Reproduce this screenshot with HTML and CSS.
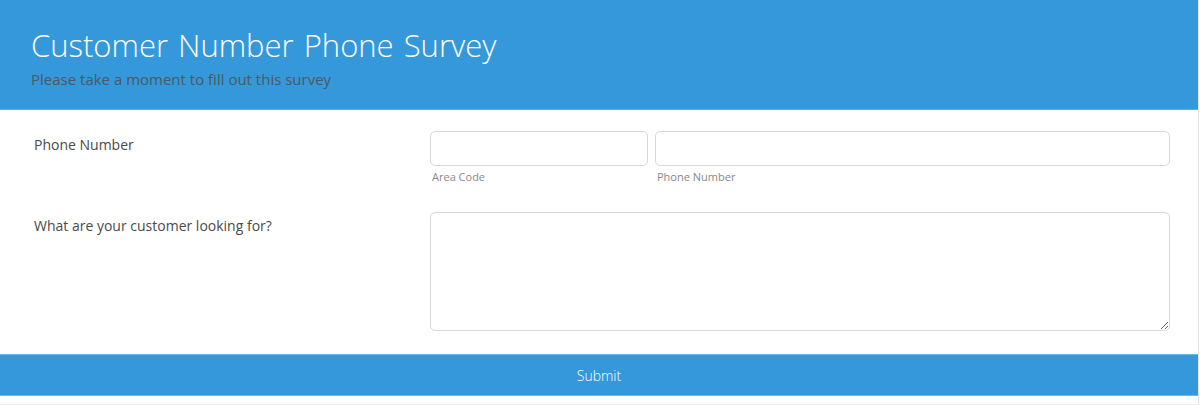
FILE: index.html
```html
<!DOCTYPE html>
<html lang="en">
<head>
<meta charset="UTF-8" />
<title>Customer Number Phone Survey</title>
<link rel="stylesheet" href="styles.css">
</head>
<body>
  <div class="survey">
    <div class="header">
      <h1>Customer Number Phone Survey</h1>
      <p>Please take a moment to fill out this survey</p>
    </div>
    <form class="form">
      <div class="row">
        <label class="label">Phone Number</label>
        <div class="phone">
          <div class="field area">
            <input type="text">
            <span class="hint">Area Code</span>
          </div>
          <div class="field number">
            <input type="text">
            <span class="hint">Phone Number</span>
          </div>
        </div>
      </div>
      <div class="row last">
        <label class="label">What are your customer looking for?</label>
        <textarea></textarea>
      </div>
      <button type="button" class="submit">Submit</button>
    </form>
  </div>
</body>
</html>
```
FILE: styles.css
```css
:root {
  --blue: #3598db;
  --text: #4a4a4a;
  --hint: #888;
  --border: #d8d8d8;
}

body {
  margin: 0;
  font-family: 'Open Sans', 'Noto Sans', sans-serif;
  background: #fff;
}

.survey {
  width: 1199px;
  border-right: 1px solid #e4e4e4;
  border-bottom: 1px solid #eee;
  height: 405px;
  box-sizing: border-box;
}

.header {
  background: var(--blue);
  height: 110px;
  padding: 26px 31px 0;
  box-sizing: border-box;
  border-bottom: 1px solid #5aaee5;
}

.header h1 {
  margin: 0;
  color: #fff;
  font-weight: 300;
  font-size: 31px;
  line-height: 38px;
  word-spacing: 2px;
}

.header p {
  margin: 5px 0 0;
  color: #4b5866;
  font-size: 15px;
  font-weight: 400;
}

.form {
  padding-top: 21px;
}

.row {
  display: grid;
  grid-template-columns: 396px 740px;
  padding-left: 34px;
  margin-bottom: 26px;
}

.row.last {
  margin-bottom: 0;
}

.label {
  color: var(--text);
  font-size: 14px;
  padding-top: 4px;
}

.phone {
  display: flex;
  gap: 7px;
}

.field {
  display: flex;
  flex-direction: column;
}

.area { width: 218px; }
.number { flex: 1; }

input, textarea {
  border: 1px solid var(--border);
  border-radius: 5px;
  box-sizing: border-box;
  font-family: inherit;
}

input {
  height: 35px;
}

.hint {
  color: var(--hint);
  font-size: 11px;
  margin-top: 3px;
  margin-bottom: 2px;
  padding-left: 2px;
}

textarea {
  width: 740px;
  height: 119px;
  resize: vertical;
}

.submit {
  display: block;
  width: 100%;
  height: 42px;
  margin-top: 23px;
  border: none;
  border-top: 1px solid #6cb8ea;
  border-bottom: 1px solid #6cb8ea;
  background: var(--blue);
  color: #fff;
  font-family: inherit;
  font-weight: 300;
  font-size: 14px;
}
```
